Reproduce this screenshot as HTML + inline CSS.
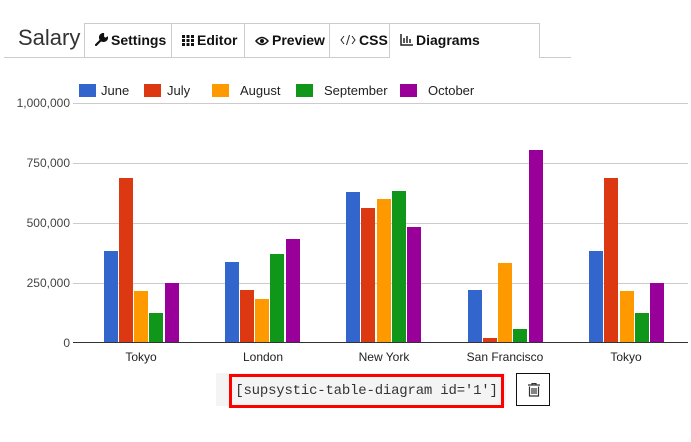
<!DOCTYPE html><html><head><style>
body{margin:0;width:691px;height:442px;background:#fff;font-family:"Liberation Sans",sans-serif;position:relative;overflow:hidden}
.a{position:absolute}
.tab{position:absolute;top:23px;height:34px;border:1px solid #ccc;border-bottom:none;background:#fff;font-weight:bold;font-size:14px;color:#111;line-height:33px;box-sizing:border-box;padding-left:10px;white-space:nowrap}
.tab svg{vertical-align:-1px;margin-right:3px}
.bar{position:absolute;width:14px}
.yl{position:absolute;right:621px;font-size:12px;color:#444}
.xl{position:absolute;top:350px;font-size:12px;color:#222;width:120px;text-align:center}
.lg{position:absolute;top:84px;width:17px;height:13px}
.lt{position:absolute;top:83px;font-size:13px;color:#222}
.g{position:absolute;left:73px;width:615px;height:1px;background:#ccc}
</style></head><body>
<div class="a" style="left:4px;top:57px;width:567px;height:1px;background:#ccc"></div>
<div class="a" style="left:18px;top:25px;font-size:22px;color:#333">Salary</div>
<div class="tab" style="left:84px;width:88px"><svg width="13" height="13"><path d="M1 12L7 6M8 1a3.5 3.5 0 1 0 4 4L10 6 8 4Z" stroke="#111" stroke-width="2.2" fill="#111" stroke-linecap="round"/></svg>Settings</div>
<div class="tab" style="left:171px;width:74px"><svg width="12" height="11"><g fill="#111"><rect x="0" y="0" width="3" height="3"/><rect x="4.5" y="0" width="3" height="3"/><rect x="9" y="0" width="3" height="3"/><rect x="0" y="4" width="3" height="3"/><rect x="4.5" y="4" width="3" height="3"/><rect x="9" y="4" width="3" height="3"/><rect x="0" y="8" width="3" height="3"/><rect x="4.5" y="8" width="3" height="3"/><rect x="9" y="8" width="3" height="3"/></g></svg>Editor</div>
<div class="tab" style="left:244px;width:86px"><svg width="14" height="10"><path d="M1 5Q7 -2 13 5Q7 12 1 5Z" stroke="#111" stroke-width="1.5" fill="none"/><circle cx="7" cy="5" r="2" fill="#111"/></svg>Preview</div>
<div class="tab" style="left:329px;width:61px"><svg width="16" height="12"><path d="M4 2L1 6 4 10M12 2L15 6 12 10M9.5 1L6.5 11" stroke="#222" stroke-width="1" fill="none"/></svg>CSS</div>
<div class="tab" style="left:389px;width:151px;height:35px">
<svg width="13" height="12"><path d="M1 0V11H13M4 4V9M7 2V9M10 5V9" stroke="#222" stroke-width="1.5" fill="none"/></svg>Diagrams</div>

<div class="lg" style="left:79px;background:#3366cc"></div><div class="lt" style="left:101px">June</div>
<div class="lg" style="left:144px;background:#dc3912"></div><div class="lt" style="left:167px">July</div>
<div class="lg" style="left:212px;background:#ff9900"></div><div class="lt" style="left:240px">August</div>
<div class="lg" style="left:296px;background:#109618"></div><div class="lt" style="left:324px">September</div>
<div class="lg" style="left:400px;background:#990099"></div><div class="lt" style="left:428px">October</div>

<div class="g" style="top:103px"></div><div class="g" style="top:163px"></div><div class="g" style="top:223px"></div><div class="g" style="top:283px"></div>
<div class="g" style="top:342px;height:1px;background:#333"></div>
<div class="yl" style="top:96px">1,000,000</div>
<div class="yl" style="top:156px">750,000</div>
<div class="yl" style="top:216px">500,000</div>
<div class="yl" style="top:276px">250,000</div>
<div class="yl" style="top:336px">0</div>

<div class="bar" style="left:104px;top:251px;height:91px;background:#3366cc"></div>
<div class="bar" style="left:119px;top:178px;height:164px;background:#dc3912"></div>
<div class="bar" style="left:134px;top:291px;height:51px;background:#ff9900"></div>
<div class="bar" style="left:149px;top:313px;height:29px;background:#109618"></div>
<div class="bar" style="left:165px;top:283px;height:59px;background:#990099"></div>

<div class="bar" style="left:225px;top:262px;height:80px;background:#3366cc"></div>
<div class="bar" style="left:240px;top:290px;height:52px;background:#dc3912"></div>
<div class="bar" style="left:255px;top:299px;height:43px;background:#ff9900"></div>
<div class="bar" style="left:270px;top:254px;height:88px;background:#109618"></div>
<div class="bar" style="left:286px;top:239px;height:103px;background:#990099"></div>

<div class="bar" style="left:346px;top:192px;height:150px;background:#3366cc"></div>
<div class="bar" style="left:361px;top:208px;height:134px;background:#dc3912"></div>
<div class="bar" style="left:377px;top:199px;height:143px;background:#ff9900"></div>
<div class="bar" style="left:392px;top:191px;height:151px;background:#109618"></div>
<div class="bar" style="left:407px;top:227px;height:115px;background:#990099"></div>

<div class="bar" style="left:468px;top:290px;height:52px;background:#3366cc"></div>
<div class="bar" style="left:483px;top:338px;height:4px;background:#dc3912"></div>
<div class="bar" style="left:498px;top:263px;height:79px;background:#ff9900"></div>
<div class="bar" style="left:513px;top:329px;height:13px;background:#109618"></div>
<div class="bar" style="left:529px;top:150px;height:192px;background:#990099"></div>

<div class="bar" style="left:589px;top:251px;height:91px;background:#3366cc"></div>
<div class="bar" style="left:604px;top:178px;height:164px;background:#dc3912"></div>
<div class="bar" style="left:620px;top:291px;height:51px;background:#ff9900"></div>
<div class="bar" style="left:635px;top:313px;height:29px;background:#109618"></div>
<div class="bar" style="left:650px;top:283px;height:59px;background:#990099"></div>

<div class="xl" style="left:81px">Tokyo</div>
<div class="xl" style="left:203px">London</div>
<div class="xl" style="left:324px">New York</div>
<div class="xl" style="left:445px">San Francisco</div>
<div class="xl" style="left:566px">Tokyo</div>

<div class="a" style="left:216px;top:373px;width:290px;height:33px;background:#f4f4f4"></div>
<div class="a" style="left:229px;top:374px;width:275px;height:34px;box-sizing:border-box;border:3px solid #f00;font-family:'Liberation Mono',monospace;font-size:14px;color:#333;line-height:28px;text-align:center;white-space:nowrap;letter-spacing:-0.2px">[supsystic-table-diagram id='1']</div>
<div class="a" style="left:516px;top:373px;width:34px;height:33px;border:1px solid #111;box-sizing:border-box">
<svg width="12" height="14" style="position:absolute;left:11px;top:9px"><path d="M0 2H12M4 2V0.5H8V2M1.5 3.5V13H10.5V3.5M4 5V11M6 5V11M8 5V11" stroke="#333" stroke-width="1.2" fill="none"/></svg></div>
</body></html>
